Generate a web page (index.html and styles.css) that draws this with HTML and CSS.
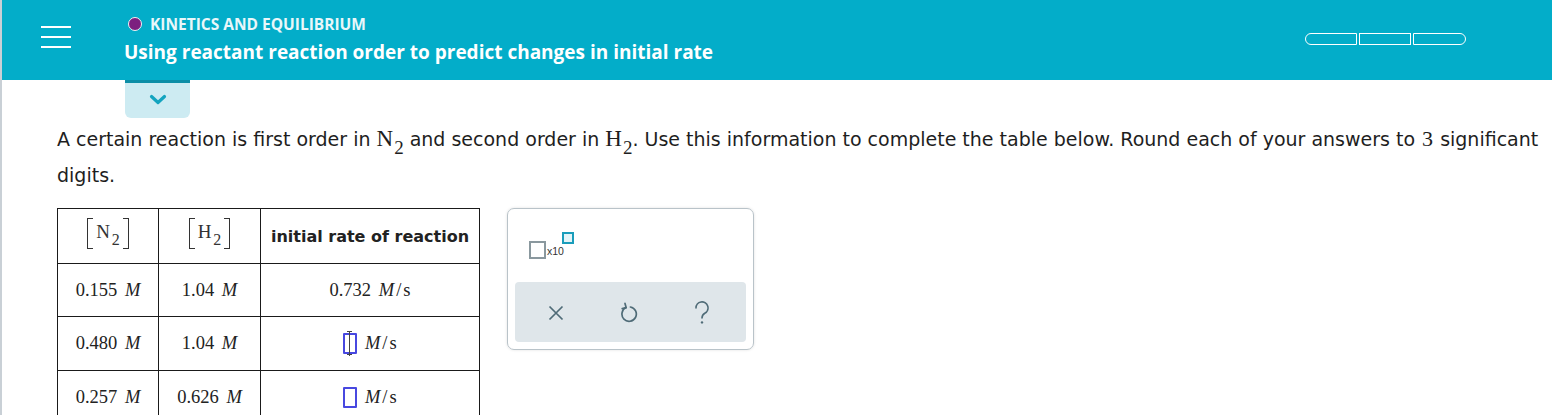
FILE: index.html
```html
<!DOCTYPE html>
<html>
<head>
<meta charset="utf-8">
<link rel="stylesheet" href="styles.css">
</head>
<body>
<div class="page">
  <header class="topbar">
    <div class="menu"><span></span><span></span><span></span></div>
    <div class="titles">
      <div class="topic"><span class="dot"></span>KINETICS AND EQUILIBRIUM</div>
      <div class="title">Using reactant reaction order to predict changes in initial rate</div>
    </div>
    <div class="progress"><span></span><span></span><span></span></div>
  </header>
  <div class="tab">
    <svg width="18" height="11" viewBox="0 0 18 11"><path d="M2.5 2.5 L9 8.5 L15.5 2.5" fill="none" stroke="#13a4bf" stroke-width="3.2" stroke-linecap="round" stroke-linejoin="round"/></svg>
  </div>
  <main class="content">
    <p class="question">A certain reaction is first order in <span class="m">N<sub>2</sub></span> and second order in <span class="m">H<sub>2</sub></span>. Use this information to complete the table below. Round each of your answers to <span class="m num">3</span> significant <span>digits.</span></p>
    <div class="work">
      <table class="data">
        <tr class="head">
          <th class="c1"><span class="br"><span class="bl"></span><span class="sym">N<sub>2</sub></span><span class="bre"></span></span></th>
          <th class="c2"><span class="br"><span class="bl"></span><span class="sym">H<sub>2</sub></span><span class="bre"></span></span></th>
          <th class="c3 label">initial rate of reaction</th>
        </tr>
        <tr class="r1">
          <td>0.155 <i>M</i></td>
          <td>1.04 <i>M</i></td>
          <td>0.732 <i>M</i><span class="sl">/</span>s</td>
        </tr>
        <tr>
          <td>0.480 <i>M</i></td>
          <td>1.04 <i>M</i></td>
          <td><span class="ans active"><span class="caret"></span></span> <i>M</i><span class="sl">/</span>s</td>
        </tr>
        <tr>
          <td>0.257 <i>M</i></td>
          <td>0.626 <i>M</i></td>
          <td><span class="ans"></span> <i>M</i><span class="sl">/</span>s</td>
        </tr>
      </table>
      <div class="panel">
        <div class="tools">
          <div class="sci"><span class="base"></span><span class="x10">x10</span><span class="exp"></span></div>
        </div>
        <div class="actions">
          <svg width="18" height="18" viewBox="0 0 18 18"><path d="M2.5 2.5 L15.5 15.5 M15.5 2.5 L2.5 15.5" stroke="#4f6b77" stroke-width="1.7" fill="none"/></svg>
          <svg width="18" height="24" viewBox="0 0 18 24"><path d="M6 6.6 A7.2 7.2 0 1 0 10.4 6" stroke="#4f6b77" stroke-width="1.7" fill="none" stroke-linecap="round"/><path d="M5 2.4 L6.2 6.7 L2.2 7.6" stroke="#4f6b77" stroke-width="1.7" fill="none" stroke-linecap="round" stroke-linejoin="round"/></svg>
          <svg width="16" height="24" viewBox="0 0 16 24"><path d="M2 7 A6 6 0 1 1 10.8 12.2 C8.6 13.5 8 14.6 8 17" stroke="#4f6b77" stroke-width="1.6" fill="none" stroke-linecap="round"/><circle cx="8" cy="21.4" r="1.2" fill="#4f6b77"/></svg>
        </div>
      </div>
    </div>
  </main>
</div>
</body>
</html>
```
FILE: styles.css
```css
* { box-sizing: border-box; }
html, body { margin: 0; padding: 0; background: #fff; }
body { overflow: hidden; }
.page {
  width: 1552px;
  height: 415px;
  border-left: 2px solid #c9d0d6;
  overflow: hidden;
}
.topbar {
  height: 80px;
  background: #03adc9;
  display: flex;
  align-items: flex-start;
  padding-left: 39px;
}
.menu {
  width: 30px;
  display: flex;
  flex-direction: column;
  gap: 8px;
  padding-top: 26px;
}
.menu span {
  display: block;
  height: 2px;
  background: #fff;
}
.titles {
  margin-left: 53px;
  display: flex;
  flex-direction: column;
  padding-top: 13px;
}
.topic {
  font-family: "Open Sans", "Lato", sans-serif;
  font-weight: 700;
  font-size: 15.5px;
  color: #e9f7fa;
  display: flex;
  align-items: center;
  letter-spacing: 0;
  height: 22px;
}
.dot {
  width: 14px;
  height: 14px;
  border-radius: 50%;
  background: #7c1f7f;
  border: 1.5px solid #f2f2f2;
  margin-left: 4px;
  margin-right: 8px;
}
.title {
  font-family: "Open Sans", "Lato", sans-serif;
  font-weight: 700;
  font-size: 19px;
  color: #fff;
  margin-top: 4px;
  letter-spacing: 0;
  line-height: 26px;
}
.progress {
  margin-left: auto;
  margin-right: 86px;
  display: flex;
  gap: 2px;
  margin-top: 33px;
}
.progress span {
  width: 52px;
  height: 12px;
  border: 1.5px solid #fff;
}
.progress span:first-child { border-radius: 6px 0 0 6px; }
.progress span:last-child { border-radius: 0 6px 6px 0; width: 53px; }

.tab {
  margin-left: 123px;
  width: 65px;
  height: 38px;
  background: #cdebf2;
  border-top: 3px solid #0d8ea6;
  border-radius: 0 0 6px 6px;
  display: flex;
  align-items: center;
  justify-content: center;
  padding-bottom: 2px;
}
.content {
  padding-left: 55px;
}
.question {
  margin: 3px 0 0 0;
  font-family: "DejaVu Sans", Verdana, sans-serif;
  font-size: 19px;
  letter-spacing: 0;
  line-height: 36px;
  color: #1e1e1e;
  width: 1495px;
}
.m {
  font-family: "Liberation Serif", "Times New Roman", serif;
  font-size: 23px;
  line-height: 1;
}
.m sub {
  font-size: 19px;
  line-height: 1;
  position: relative;
  vertical-align: baseline;
  top: 8px;
  margin-left: 1px;
}
.num { font-size: 22px; margin: 0 1px; }
.work {
  margin-top: 15px;
  display: flex;
  align-items: flex-start;
  gap: 27px;
}
.data {
  border-collapse: collapse;
  font-family: "Liberation Serif", "Times New Roman", serif;
  font-size: 18.5px;
  color: #222;
}
.data th, .data td {
  border: 1px solid #1a1a1a;
  text-align: center;
  padding: 0;
}
.data .head th { height: 55px; }
.data tr td { height: 54px; }
.data .r1 td { height: 53px; }
.data .c1 { width: 101px; }
.data .c2 { width: 102px; }
.data .c3 { width: 219px; }
.data i { font-style: italic; margin-left: 3px; }
.sl { margin: 0 2px; }
.label {
  font-family: "DejaVu Sans", Verdana, sans-serif;
  font-weight: bold;
  font-size: 16px;
  color: #222;
}
.br {
  display: inline-flex;
  align-items: center;
  font-weight: normal;
  font-size: 19px;
  color: #333;
}
.bl, .bre {
  width: 6px;
  height: 31px;
  border: 1.5px solid #333;
}
.bl { border-right: none; margin-right: 3px; }
.bre { border-left: none; margin-left: 3px; }
.sym { position: relative; top: -2px; }
.sym sub {
  font-size: 16px;
  vertical-align: baseline;
  position: relative;
  top: 7px;
  margin-left: 2px;
}
.ans {
  display: inline-block;
  width: 14px;
  height: 21px;
  border: 2px solid #4848e0;
  border-radius: 1px;
  vertical-align: -5px;
  position: relative;
}
.caret {
  position: absolute;
  left: 4px;
  top: -4px;
  width: 2px;
  height: 25px;
  border-left: 1px solid #444;
}
.caret::before, .caret::after {
  content: "";
  position: absolute;
  left: -3px;
  width: 5px;
  height: 2px;
  border-top: 1px solid #444;
}
.caret::before { top: 0; }
.caret::after { bottom: -1px; }
.panel {
  width: 247px;
  height: 142px;
  border: 1px solid #b9c3c9;
  border-radius: 7px;
  box-shadow: 0 0 3px rgba(0,0,0,0.12);
  padding: 0 7px 7px 7px;
  display: flex;
  flex-direction: column;
}
.tools {
  height: 73px;
  padding: 22px 0 0 14px;
}
.sci {
  position: relative;
  width: 60px;
  height: 30px;
}
.sci .base {
  position: absolute;
  left: 0;
  top: 10px;
  width: 17px;
  height: 18px;
  border: 2px solid #8a989e;
}
.sci .x10 {
  position: absolute;
  left: 18px;
  top: 14px;
  font-family: "Liberation Sans", Arial, sans-serif;
  font-size: 10.5px;
  color: #333;
}
.sci .exp {
  position: absolute;
  left: 33px;
  top: 1px;
  width: 12px;
  height: 12px;
  border: 2px solid #1a9dbb;
  background: #e3f4f8;
}
.actions {
  flex: 1;
  background: #dfe6ea;
  border-radius: 4px;
  display: flex;
  align-items: center;
  justify-content: space-around;
  padding: 2px 8px 0 4px;
}
```
